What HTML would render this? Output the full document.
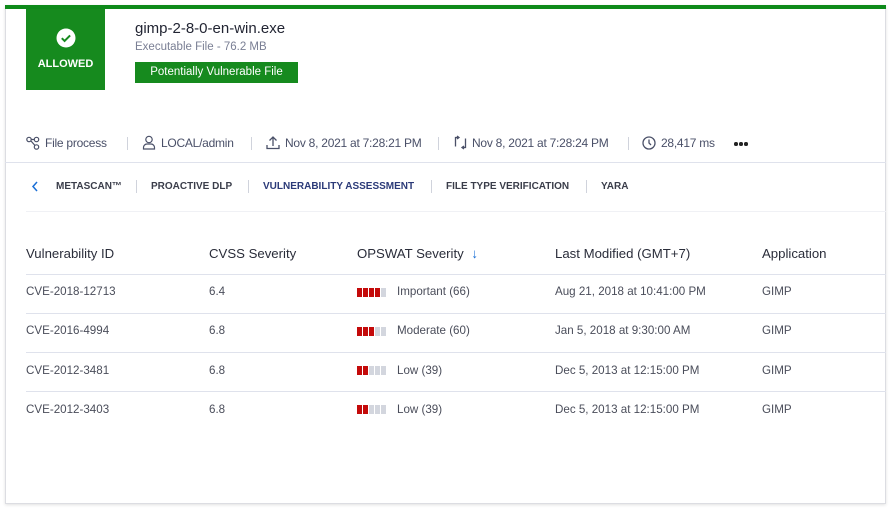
<!DOCTYPE html>
<html><head><meta charset="utf-8"><style>
*{margin:0;padding:0;box-sizing:border-box}
body{width:891px;height:510px;background:#fff;font-family:"Liberation Sans",sans-serif;position:relative;overflow:hidden;color:#3a3d4a}
.card{position:absolute;left:5px;top:5px;width:881px;height:499px;background:#fff;border:1px solid #dcdde2;border-top:none;box-shadow:0 1px 3px rgba(0,0,0,.12)}
.bar{position:absolute;left:5px;top:5px;width:881px;height:4px;background:#0e8a1a}
.a{position:absolute}
.allowed{left:26px;top:9px;width:79px;height:81px;background:#168a1e;color:#fff;font-size:11px;font-weight:bold;text-align:center}
.t{white-space:nowrap;font-size:12.5px}
.meta{color:#4a5068;font-size:12px;letter-spacing:-0.25px;white-space:nowrap}
.sep{position:absolute;width:1px;height:13px;background:#d0d3dc}
.tab{font-size:10px;font-weight:bold;color:#3a3d4a;white-space:nowrap}
.hl{position:absolute;left:26px;width:860px;height:1px;background:#dfe2ec}
.th{font-size:13.2px;color:#2a2d3a;white-space:nowrap}
.td{font-size:11.6px;color:#4a4d5a;white-space:nowrap}
.sev{position:absolute;display:flex;gap:1px}
.sev i{display:block;width:5px;height:9px;background:#d3d6de}
.sev i.r{background:#c40a0a}
.dot{position:absolute;width:3.5px;height:3.5px;border-radius:50%;background:#222;top:142px}
</style></head><body>
<div class="card"></div><div class="bar"></div>
<div class="a allowed">
<svg class="a" style="left:30px;top:19px" width="20" height="20" viewBox="0 0 20 20"><circle cx="10" cy="10" r="9.5" fill="#fff"/><path d="M5.8 10.2l2.8 2.8 5.5-5.6" stroke="#168a1e" stroke-width="2" fill="none"/></svg>
<div class="a" style="left:0;width:79px;top:49px">ALLOWED</div></div>
<div class="a t" style="left:135px;top:20px;font-size:15px;color:#222533">gimp-2-8-0-en-win.exe</div>
<div class="a t" style="left:135px;top:41px;font-size:11.5px;color:#7a7f94">Executable File - 76.2 MB</div>
<div class="a t" style="left:135px;top:62px;width:163px;height:21px;background:#168a1e;color:#fff;font-size:11.5px;line-height:21px;text-align:center">Potentially Vulnerable File</div>

<svg class="a" style="left:26px;top:136px" width="14" height="14" viewBox="0 0 14 14" fill="none" stroke="#4a5068" stroke-width="1.2"><circle cx="3" cy="3.5" r="2.2"/><circle cx="10.5" cy="3.5" r="2.2"/><circle cx="10.5" cy="11" r="2.2"/><path d="M5.2 3.5h3M5 5l4 4.5"/></svg>
<div class="a meta" style="left:45px;top:136px">File process</div>
<div class="sep" style="left:127px;top:137px"></div>
<svg class="a" style="left:142px;top:135px" width="14" height="15" viewBox="0 0 14 15" fill="none" stroke="#4a5068" stroke-width="1.2"><circle cx="7" cy="4.5" r="3.2"/><path d="M1.5 14v-1.5a3.5 3.5 0 0 1 3.5-3.5h4a3.5 3.5 0 0 1 3.5 3.5V14z"/></svg>
<div class="a meta" style="left:161px;top:136px">LOCAL/admin</div>
<div class="sep" style="left:251px;top:137px"></div>
<svg class="a" style="left:266px;top:135px" width="14" height="15" viewBox="0 0 14 15" fill="none" stroke="#4a5068" stroke-width="1.3"><path d="M7 11V2M3.5 5.5L7 2l3.5 3.5M1 10v3.5h12V10"/></svg>
<div class="a meta" style="left:285px;top:136px">Nov 8, 2021 at 7:28:21 PM</div>
<div class="sep" style="left:438px;top:137px"></div>
<svg class="a" style="left:453px;top:135px" width="15" height="15" viewBox="0 0 15 15" fill="none" stroke="#4a5068" stroke-width="1.3"><path d="M5 2.5H2.5v9M10 12.5h2.5v-9M4 1l2 1.5L4 4M11 11l-2 1.5 2 1.5"/></svg>
<div class="a meta" style="left:472px;top:136px">Nov 8, 2021 at 7:28:24 PM</div>
<div class="sep" style="left:628px;top:137px"></div>
<svg class="a" style="left:642px;top:136px" width="14" height="14" viewBox="0 0 14 14" fill="none" stroke="#4a5068" stroke-width="1.3"><circle cx="7" cy="7" r="6"/><path d="M7 3.5V7l2 2"/></svg>
<div class="a meta" style="left:661px;top:136px">28,417 ms</div>
<div class="dot" style="left:734px"></div><div class="dot" style="left:739px"></div><div class="dot" style="left:744px"></div>
<div class="a" style="left:5px;top:162px;width:881px;height:1px;background:#dfe2ec"></div>

<svg class="a" style="left:31px;top:181px" width="8" height="11" viewBox="0 0 8 11"><path d="M6 1L2 5.5 6 10" stroke="#1a6fd6" stroke-width="1.5" fill="none"/></svg>
<div class="a tab" style="left:56px;top:181px">METASCAN™</div>
<div class="sep" style="left:136px;top:180px"></div>
<div class="a tab" style="left:151px;top:181px">PROACTIVE DLP</div>
<div class="sep" style="left:248px;top:180px"></div>
<div class="a tab" style="left:263px;top:181px;color:#2b3a78">VULNERABILITY ASSESSMENT</div>
<div class="sep" style="left:431px;top:180px"></div>
<div class="a tab" style="left:446px;top:181px">FILE TYPE VERIFICATION</div>
<div class="sep" style="left:586px;top:180px"></div>
<div class="a tab" style="left:601px;top:181px">YARA</div>
<div class="a" style="left:26px;top:211px;width:860px;height:1px;background:#f0f1f5"></div>

<div class="a th" style="left:26px;top:246px">Vulnerability ID</div>
<div class="a th" style="left:209px;top:246px">CVSS Severity</div>
<div class="a th" style="left:357px;top:246px">OPSWAT Severity <span style="color:#1a6fd6;margin-left:4px">↓</span></div>
<div class="a th" style="left:555px;top:246px">Last Modified (GMT+7)</div>
<div class="a th" style="left:762px;top:246px">Application</div>
<div class="hl" style="top:274px"></div>
<div class="hl" style="top:313px"></div>
<div class="hl" style="top:352px"></div>
<div class="hl" style="top:391px"></div>

<div class="a td" style="left:26px;top:285px">CVE-2018-12713</div>
<div class="a td" style="left:209px;top:285px">6.4</div>
<div class="sev" style="left:357px;top:288px"><i class="r"></i><i class="r"></i><i class="r"></i><i class="r"></i><i></i></div>
<div class="a td" style="left:397px;top:285px">Important (66)</div>
<div class="a td" style="left:555px;top:285px">Aug 21, 2018 at 10:41:00 PM</div>
<div class="a td" style="left:762px;top:285px">GIMP</div>

<div class="a td" style="left:26px;top:324px">CVE-2016-4994</div>
<div class="a td" style="left:209px;top:324px">6.8</div>
<div class="sev" style="left:357px;top:327px"><i class="r"></i><i class="r"></i><i class="r"></i><i></i><i></i></div>
<div class="a td" style="left:397px;top:324px">Moderate (60)</div>
<div class="a td" style="left:555px;top:324px">Jan 5, 2018 at 9:30:00 AM</div>
<div class="a td" style="left:762px;top:324px">GIMP</div>

<div class="a td" style="left:26px;top:364px">CVE-2012-3481</div>
<div class="a td" style="left:209px;top:364px">6.8</div>
<div class="sev" style="left:357px;top:366px"><i class="r"></i><i class="r"></i><i></i><i></i><i></i></div>
<div class="a td" style="left:397px;top:364px">Low (39)</div>
<div class="a td" style="left:555px;top:364px">Dec 5, 2013 at 12:15:00 PM</div>
<div class="a td" style="left:762px;top:364px">GIMP</div>

<div class="a td" style="left:26px;top:403px">CVE-2012-3403</div>
<div class="a td" style="left:209px;top:403px">6.8</div>
<div class="sev" style="left:357px;top:405px"><i class="r"></i><i class="r"></i><i></i><i></i><i></i></div>
<div class="a td" style="left:397px;top:403px">Low (39)</div>
<div class="a td" style="left:555px;top:403px">Dec 5, 2013 at 12:15:00 PM</div>
<div class="a td" style="left:762px;top:403px">GIMP</div>
</body></html>
